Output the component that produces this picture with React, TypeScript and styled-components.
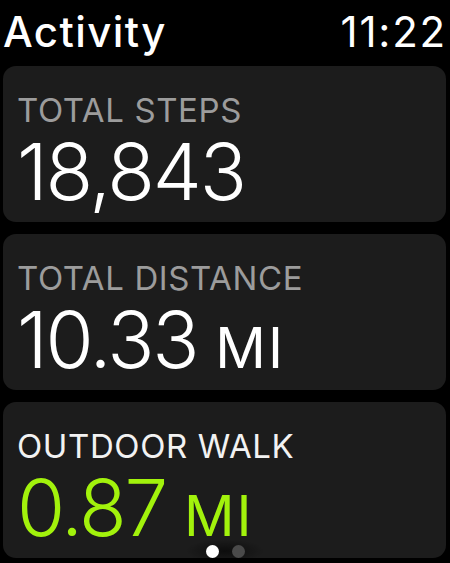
import React from "react";
import styled, { createGlobalStyle } from "styled-components";

const Global = createGlobalStyle`
  html, body { margin: 0; padding: 0; background: #000; }
  body { width: 450px; height: 563px; overflow: hidden; font-family: Inter, "Noto Sans", sans-serif; }
`;

const Screen = styled.div`
  position: relative;
  width: 450px;
  height: 563px;
  background: #000;
  display: flex;
  flex-direction: column;
`;

const Header = styled.div`
  height: 66px;
  display: flex;
  justify-content: space-between;
  align-items: flex-start;
  padding: 3px 5px 0 3px;
  box-sizing: border-box;
  color: #fff;
`;

const Title = styled.div`
  font-size: 42px;
  line-height: 58px;
  font-weight: 500;
  letter-spacing: 1.4px;
`;

const Clock = styled.div`
  font-size: 42px;
  line-height: 58px;
  font-weight: 400;
  letter-spacing: 1.8px;
  margin-right: -2px;
`;

const Cards = styled.div`
  display: flex;
  flex-direction: column;
  gap: 12px;
  padding: 0 4px 0 3px;
`;

const Card = styled.div`
  height: 156px;
  box-sizing: border-box;
  border-radius: 13px;
  background: #1c1c1c;
  padding: 24px 0 0 14px;
  display: flex;
  flex-direction: column;
`;

const Label = styled.div<{ $bright?: boolean }>`
  font-size: 33px;
  line-height: 40px;
  font-weight: 400;
  color: ${(p) => (p.$bright ? "#f2f2f2" : "#9c9c9c")};
  letter-spacing: 0.6px;
`;

const Value = styled.div<{ $color: string }>`
  font-size: 78px;
  line-height: 70px;
  font-weight: 300;
  margin-top: 7px;
  color: ${(p) => p.$color};
  letter-spacing: -2.2px;
`;

const Unit = styled.span`
  font-size: 56px;
  font-weight: 400;
  letter-spacing: 2px;
  margin-left: 18px;
`;

const Pager = styled.div`
  position: absolute;
  left: 185px;
  bottom: 0;
  width: 80px;
  height: 24px;
  display: flex;
  justify-content: center;
  align-items: center;
  gap: 13px;
  background: radial-gradient(ellipse at center, rgba(0,0,0,0.55) 0%, rgba(0,0,0,0) 70%);
`;

const Dot = styled.div<{ $active?: boolean }>`
  width: 13px;
  height: 13px;
  border-radius: 50%;
  background: ${(p) => (p.$active ? "#fff" : "#4a4a4a")};
`;

const data = [
  { label: "TOTAL STEPS", value: "18,843", color: "#fff" },
  { label: "TOTAL DISTANCE", value: "10.33", unit: "MI", color: "#fff" },
  { label: "OUTDOOR WALK", value: "0.87", unit: "MI", color: "#a2f20c", bright: true },
];

export default function App() {
  return (
    <>
      <Global />
      <Screen>
        <Header>
          <Title>Activity</Title>
          <Clock>11:22</Clock>
        </Header>
        <Cards>
          {data.map((d) => (
            <Card key={d.label}>
              <Label $bright={d.bright}>{d.label}</Label>
              <Value $color={d.color}>
                {d.value}
                {d.unit && <Unit>{d.unit}</Unit>}
              </Value>
            </Card>
          ))}
        </Cards>
        <Pager>
          <Dot $active />
          <Dot />
        </Pager>
      </Screen>
    </>
  );
}
